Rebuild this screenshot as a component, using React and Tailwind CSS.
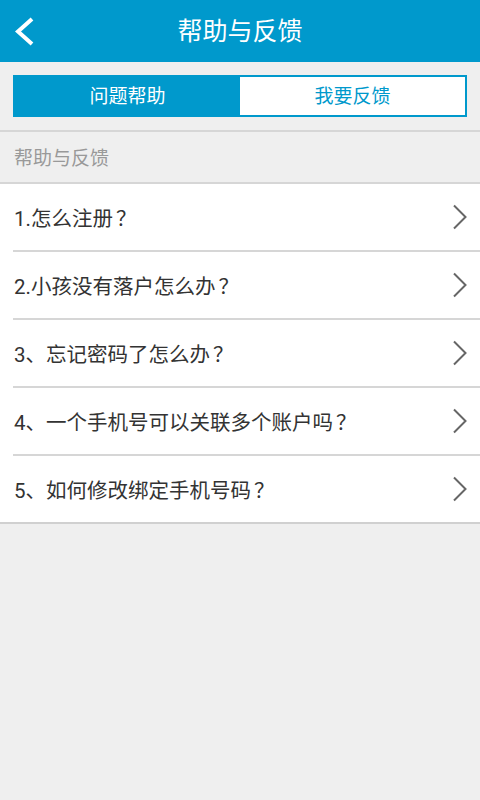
import React from "react";

const items = [
  "1.怎么注册？",
  "2.小孩没有落户怎么办？",
  "3、忘记密码了怎么办？",
  "4、一个手机号可以关联多个账户吗？",
  "5、如何修改绑定手机号码？",
];

function Chevron() {
  return (
    <svg width="16" height="26" viewBox="0 0 16 26" className="shrink-0">
      <path d="M2 1.5 L13.5 13 L2 24.5" fill="none" stroke="#666" strokeWidth="2" />
    </svg>
  );
}

function Label({ text }) {
  const body = text.slice(0, -1);
  return (
    <span className="inline-block pt-[4px] text-[20.5px] text-[#333]">
      {body}
      <span className="ml-[3px]">？</span>
    </span>
  );
}

export default function App() {
  return (
    <div
      className="w-[480px] h-[800px] bg-[#efefef] flex flex-col"
      style={{ fontFamily: 'Roboto, "Noto Sans CJK SC", "Noto Sans", sans-serif' }}
      lang="zh-CN"
    >
      <div className="h-[62px] bg-[#0099cc] flex items-center relative shrink-0">
        <div className="pl-[13px] flex items-center">
          <svg width="24" height="30" viewBox="0 0 24 30">
            <path d="M19 3 L5 15.5 L19 28" fill="none" stroke="#fff" strokeWidth="4" />
          </svg>
        </div>
        <div className="absolute inset-0 flex items-center justify-center text-white text-[25px] pt-[2px] pointer-events-none">
          帮助与反馈
        </div>
      </div>
      <div className="pt-[13px] px-[13px] pb-[13px]">
        <div className="h-[42px] flex border-2 border-[#0099cc]">
          <div className="flex-1 bg-[#0099cc] text-white text-[19px] pt-[3px] flex items-center justify-center">
            问题帮助
          </div>
          <div className="flex-1 bg-white text-[#0099cc] text-[19px] pt-[3px] flex items-center justify-center">
            我要反馈
          </div>
        </div>
      </div>
      <div className="h-[54px] border-t-2 border-b-2 border-[#d6d6d6] flex items-center pl-[14px] pt-[4px] text-[19px] text-[#999]">
        帮助与反馈
      </div>
      <div className="bg-white">
        {items.map((t, i) => (
          <div
            key={i}
            className={
              i === items.length - 1
                ? "h-[68px] flex items-center justify-between pl-[14px] pr-[12px] border-b-2 border-[#d0d0d0]"
                : "ml-[13px] h-[68px] flex items-center justify-between pl-px pr-[12px] border-b-2 border-[#d6d6d6]"
            }
          >
            <Label text={t} />
            <Chevron />
          </div>
        ))}
      </div>
    </div>
  );
}
